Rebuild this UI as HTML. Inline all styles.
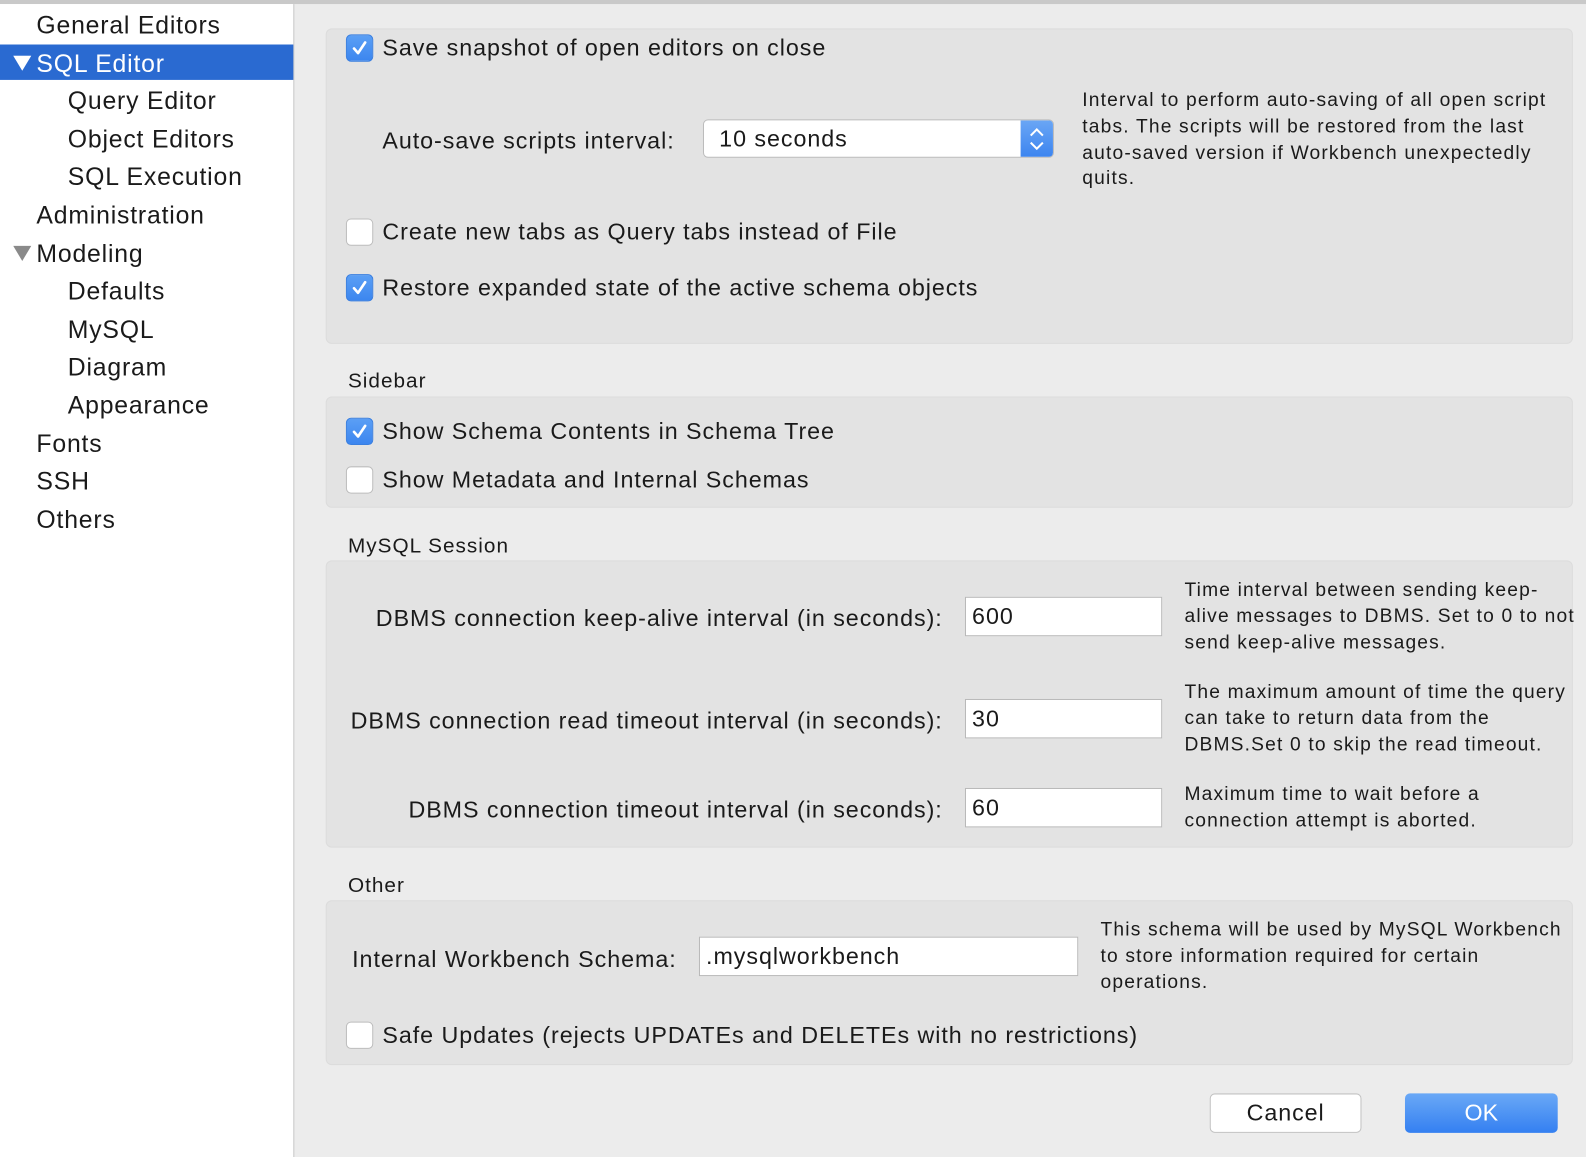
<!DOCTYPE html>
<html><head><meta charset="utf-8"><style>
html,body{margin:0;padding:0;width:1586px;height:1150px;overflow:hidden;background:#ececec;font-family:"Liberation Sans",sans-serif;color:#1a1a1a}
#c{position:absolute;left:0;top:0;width:1568px;height:1137px;transform:scale(1.0115);transform-origin:0 0}
.a{position:absolute;white-space:nowrap}
.side{position:absolute;left:0;top:4px;width:290px;height:1140px;background:#fff;border-right:1px solid #c4c4c4}
.top{position:absolute;left:0;top:0;width:1568px;height:4px;background:#c9c9c9}
.si{position:absolute;font-size:24.5px;line-height:30px;height:30px;letter-spacing:0.8px;white-space:nowrap}
.box{position:absolute;left:322px;width:1233px;background:#e3e3e3;border:1px solid #dcdcdc;border-radius:6px;box-sizing:border-box}
.t{position:absolute;font-size:23px;line-height:28px;white-space:nowrap;letter-spacing:0.95px}
.h{position:absolute;font-size:19px;line-height:26px;white-space:nowrap;letter-spacing:1.15px}
.g{position:absolute;font-size:20.5px;line-height:26px;letter-spacing:1px}
.cb{position:absolute;left:342px;width:27px;height:27px;border-radius:5px;box-sizing:border-box}
.on{background:linear-gradient(#5b9ff5,#3c86ef);border:1px solid #3a7fe0}
.off{background:#fff;border:1px solid #bdbdbd}
.in{position:absolute;background:#fff;border:1px solid #b8b8b8;box-sizing:border-box;font-size:23px;line-height:37px;padding-left:6px;letter-spacing:0.95px}
</style></head><body><div id="c">
<div class="top"></div>
<div class="side"></div>
<div class="a" style="left:0;top:44px;width:290px;height:35px;background:#2a6ad1"></div>
<svg class="a" style="left:13px;top:55px" width="18" height="15"><polygon points="0,0 18,0 9,15" fill="#fff"/></svg>
<svg class="a" style="left:13px;top:243px" width="18" height="15"><polygon points="0,0 18,0 9,15" fill="#8a8a8a"/></svg>
<div class="si" style="left:36px;top:11px">General Editors</div>
<div class="si" style="left:36px;top:49px;color:#fff">SQL Editor</div>
<div class="si" style="left:67px;top:86px">Query Editor</div>
<div class="si" style="left:67px;top:124px">Object Editors</div>
<div class="si" style="left:67px;top:161px">SQL Execution</div>
<div class="si" style="left:36px;top:199px">Administration</div>
<div class="si" style="left:36px;top:237px">Modeling</div>
<div class="si" style="left:67px;top:274px">Defaults</div>
<div class="si" style="left:67px;top:312px">MySQL</div>
<div class="si" style="left:67px;top:349px">Diagram</div>
<div class="si" style="left:67px;top:387px">Appearance</div>
<div class="si" style="left:36px;top:425px">Fonts</div>
<div class="si" style="left:36px;top:462px">SSH</div>
<div class="si" style="left:36px;top:500px">Others</div>

<div class="box" style="top:28px;height:312px"></div>
<div class="box" style="top:392px;height:110px"></div>
<div class="box" style="top:554px;height:284px"></div>
<div class="box" style="top:890px;height:163px"></div>

<div class="g" style="left:344px;top:364px">Sidebar</div>
<div class="g" style="left:344px;top:527px">MySQL Session</div>
<div class="g" style="left:344px;top:863px">Other</div>

<div class="cb on" style="top:34px"><svg width="25" height="25"><path d="M7 13 L11 17.5 L18 7" stroke="#fff" stroke-width="2.6" fill="none" stroke-linecap="round" stroke-linejoin="round"/></svg></div>
<div class="t" style="left:378px;top:33px">Save snapshot of open editors on close</div>
<div class="t" style="left:378px;top:125px">Auto-save scripts interval:</div>
<div class="a" style="left:695px;top:118px;width:347px;height:38px;background:#fff;border:1px solid #bcbcbc;border-radius:5px;box-sizing:border-box;overflow:hidden">
<div class="t" style="left:15px;top:4px">10 seconds</div>
<div class="a" style="right:0;top:0;width:32px;height:38px;background:linear-gradient(#6aa6f5,#3a83ef)"><svg width="32" height="36"><path d="M10 15 L16 9 L22 15 M10 22 L16 28 L22 22" stroke="#fff" stroke-width="2" fill="none"/></svg></div>
</div>
<div class="h" style="left:1070px;top:87px">Interval to perform auto-saving of all open script</div>
<div class="h" style="left:1070px;top:113px">tabs. The scripts will be restored from the last</div>
<div class="h" style="left:1070px;top:139px">auto-saved version if Workbench unexpectedly</div>
<div class="h" style="left:1070px;top:164px">quits.</div>
<div class="cb off" style="top:216px"></div>
<div class="t" style="left:378px;top:215px">Create new tabs as Query tabs instead of File</div>
<div class="cb on" style="top:271px"><svg width="25" height="25"><path d="M7 13 L11 17.5 L18 7" stroke="#fff" stroke-width="2.6" fill="none" stroke-linecap="round" stroke-linejoin="round"/></svg></div>
<div class="t" style="left:378px;top:270px">Restore expanded state of the active schema objects</div>

<div class="cb on" style="top:413px"><svg width="25" height="25"><path d="M7 13 L11 17.5 L18 7" stroke="#fff" stroke-width="2.6" fill="none" stroke-linecap="round" stroke-linejoin="round"/></svg></div>
<div class="t" style="left:378px;top:412px">Show Schema Contents in Schema Tree</div>
<div class="cb off" style="top:461px"></div>
<div class="t" style="left:378px;top:460px">Show Metadata and Internal Schemas</div>

<div class="t" style="right:636px;top:597px">DBMS connection keep-alive interval (in seconds):</div>
<div class="in" style="left:954px;top:590px;width:195px;height:39px">600</div>
<div class="h" style="left:1171px;top:571px">Time interval between sending keep-</div>
<div class="h" style="left:1171px;top:597px">alive messages to DBMS. Set to 0 to not</div>
<div class="h" style="left:1171px;top:623px">send keep-alive messages.</div>
<div class="t" style="right:636px;top:698px">DBMS connection read timeout interval (in seconds):</div>
<div class="in" style="left:954px;top:691px;width:195px;height:39px">30</div>
<div class="h" style="left:1171px;top:672px">The maximum amount of time the query</div>
<div class="h" style="left:1171px;top:698px">can take to return data from the</div>
<div class="h" style="left:1171px;top:724px">DBMS.Set 0 to skip the read timeout.</div>
<div class="t" style="right:636px;top:786px">DBMS connection timeout interval (in seconds):</div>
<div class="in" style="left:954px;top:779px;width:195px;height:39px">60</div>
<div class="h" style="left:1171px;top:773px">Maximum time to wait before a</div>
<div class="h" style="left:1171px;top:799px">connection attempt is aborted.</div>

<div class="t" style="right:899px;top:934px">Internal Workbench Schema:</div>
<div class="in" style="left:691px;top:926px;width:375px;height:39px">.mysqlworkbench</div>
<div class="h" style="left:1088px;top:907px">This schema will be used by MySQL Workbench</div>
<div class="h" style="left:1088px;top:933px">to store information required for certain</div>
<div class="h" style="left:1088px;top:959px">operations.</div>
<div class="cb off" style="top:1010px"></div>
<div class="t" style="left:378px;top:1009px">Safe Updates (rejects UPDATEs and DELETEs with no restrictions)</div>

<div class="a" style="left:1196px;top:1081px;width:150px;height:39px;background:#fff;border:1px solid #c2c2c2;border-radius:5px;box-sizing:border-box;text-align:center;font-size:23px;line-height:37px;letter-spacing:0.9px">Cancel</div>
<div class="a" style="left:1389px;top:1081px;width:151px;height:39px;background:linear-gradient(#6aa8f6,#3480f1);border-radius:5px;text-align:center;font-size:23px;line-height:39px;color:#fff">OK</div>
</div></body></html>
